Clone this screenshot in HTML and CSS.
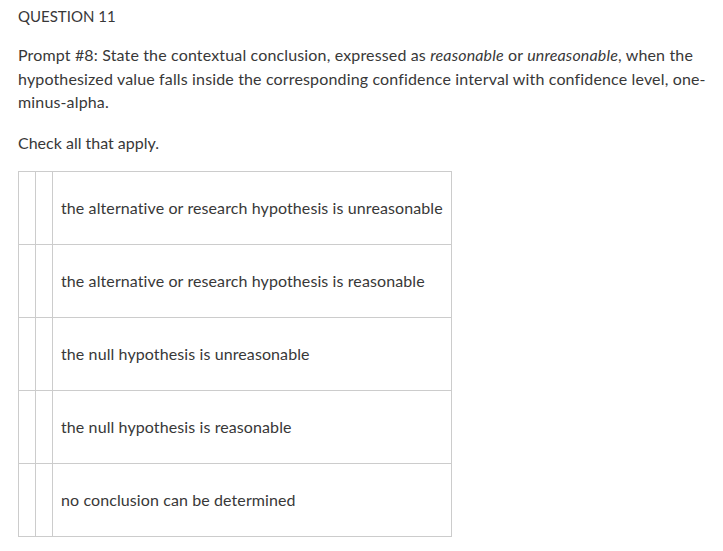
FILE: index.html
```html
<!DOCTYPE html>
<html>
<head>
<meta charset="utf-8">
<link rel="stylesheet" href="styles.css">
</head>
<body>
<div class="page">
  <div class="qtitle">QUESTION 11</div>
  <p class="prompt">Prompt #8: State the contextual conclusion, expressed as <em>reasonable</em> or <em>unreasonable</em>, when the hypothesized value falls inside the corresponding confidence interval with confidence level, one-minus-alpha.</p>
  <p class="hint">Check all that apply.</p>
  <table class="choices">
    <tr><td class="c1"></td><td class="c2"></td><td class="txt">the alternative or research hypothesis is unreasonable</td></tr>
    <tr><td class="c1"></td><td class="c2"></td><td class="txt">the alternative or research hypothesis is reasonable</td></tr>
    <tr><td class="c1"></td><td class="c2"></td><td class="txt">the null hypothesis is unreasonable</td></tr>
    <tr><td class="c1"></td><td class="c2"></td><td class="txt">the null hypothesis is reasonable</td></tr>
    <tr><td class="c1"></td><td class="c2"></td><td class="txt">no conclusion can be determined</td></tr>
  </table>
</div>
</body>
</html>
```
FILE: styles.css
```css
html, body {
  margin: 0;
  padding: 0;
  background: #fff;
}
body {
  font-family: Lato, "Liberation Sans", sans-serif;
  color: #383838;
  font-variant-ligatures: none;
}
.page {
  padding: 6px 14px 0 18px;
}
.qtitle {
  font-size: 15px;
  line-height: 20px;
}
.prompt {
  font-size: 16px;
  line-height: 23.5px;
  margin: 17px 0 0 0;
  letter-spacing: 0.15px;
}
.hint {
  font-size: 16px;
  line-height: 23px;
  margin: 17px 0 0 0;
}
.choices {
  border-collapse: collapse;
  margin-top: 17px;
}
.choices tr {
  height: 73px;
}
.choices td {
  border: 1px solid #ccc;
  padding: 0;
}
.choices .c1, .choices .c2 {
  width: 16px;
}
.choices .txt {
  font-size: 16px;
  letter-spacing: 0.1px;
  padding: 0 8px 0 8px;
  width: 382px;
}
```
